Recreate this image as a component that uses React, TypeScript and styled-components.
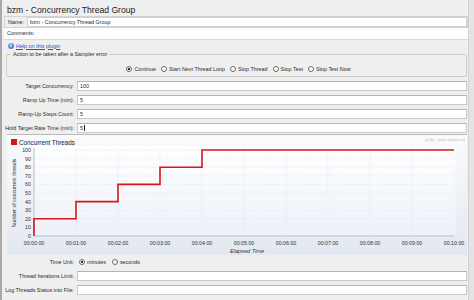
import styled, { createGlobalStyle } from 'styled-components'

const GlobalStyle = createGlobalStyle`
  * { box-sizing: border-box; }
  body {
    margin: 0;
    background: #e9e9e9;
    font-family: 'Liberation Sans', Arial, sans-serif;
    color: #2b2b2b;
  }
`

const minutes = [0, 1, 2, 3, 4, 5, 6, 7, 8, 9, 10]
const levels = [0, 10, 20, 30, 40, 50, 60, 70, 80, 90, 100]
const steps = [20, 40, 60, 80, 100]

// plot area in svg coords
const X0 = 27
const X1 = 447
const YTOP = 15
const YBOT = 101
const px = (m: number) => X0 + ((X1 - X0) * m) / 10
const py = (v: number) => YBOT - ((YBOT - YTOP) * v) / 100

function stepPath() {
  let d = `M${px(0)} ${py(0)} L${px(0)} ${py(20)}`
  steps.forEach((v, i) => {
    const next = steps[i + 1]
    const end = next === undefined ? 10 : i + 1
    d += ` L${px(end)} ${py(v)}`
    if (next !== undefined) d += ` L${px(end)} ${py(next)}`
  })
  return d
}

const pad = (n: number) => `00:${String(n).padStart(2, '0')}:00`

function Chart() {
  return (
    <ChartPanel>
      <svg width='460' height='121' viewBox='0 0 460 121'>
        <defs>
          <linearGradient id='plotBg' x1='0' y1='0' x2='0' y2='1'>
            <stop offset='0' stopColor='#ffffff' />
            <stop offset='1' stopColor='#edf1f8' />
          </linearGradient>
        </defs>
        <rect x={X0} y={YTOP - 4} width={X1 - X0 + 2} height={YBOT - YTOP + 4} fill='url(#plotBg)' />
        <rect x='4' y='4' width='6' height='6' fill='#d8141c' />
        <text x='12' y='10' fontSize='6.3' fill='#222'>Concurrent Threads</text>
        <text x='418' y='6' fontSize='3.4' fill='#b9bec7'>jp@gc - jmeter-plugins.org</text>
        {levels.map(v => (
          <g key={v}>
            <line x1={X0} x2={X1} y1={py(v)} y2={py(v)} stroke='#dfe4ec' strokeWidth='0.6' strokeDasharray='1.5 1' />
            <text x={X0 - 3} y={py(v) + 2} fontSize='5.3' fill='#333' textAnchor='end'>{v}</text>
          </g>
        ))}
        {minutes.map(m => (
          <g key={m}>
            <line x1={px(m)} x2={px(m)} y1={YTOP - 2} y2={YBOT} stroke='#dfe4ec' strokeWidth='0.6' strokeDasharray='1.5 1' />
            <text x={px(m)} y={110} fontSize='5.3' fill='#333' textAnchor='middle'>{pad(m)}</text>
          </g>
        ))}
        <line x1={X0} x2={X0} y1={YTOP - 2} y2={YBOT} stroke='#9aa3b0' strokeWidth='0.6' />
        <line x1={X0} x2={X1} y1={YBOT} y2={YBOT} stroke='#9aa3b0' strokeWidth='0.6' />
        <text x='240' y='118' fontSize='5.6' fontStyle='italic' fill='#333' textAnchor='middle'>Elapsed Time</text>
        <text
          x='0'
          y='0'
          fontSize='5.2'
          fill='#333'
          textAnchor='middle'
          transform='translate(9 58) rotate(-90)'
        >
          Number of concurrent threads
        </text>
        <path d={stepPath()} fill='none' stroke='#d8141c' strokeWidth='1.6' />
      </svg>
    </ChartPanel>
  )
}

function Radio({ label, checked }: { label: string; checked?: boolean }) {
  return (
    <RadioItem>
      <RadioDot $checked={checked} />
      {label}
    </RadioItem>
  )
}

export default function App() {
  return (
    <>
      <GlobalStyle />
      <Page>
        <Main>
          <Title>bzm - Concurrency Thread Group</Title>
          <NameRow>
            <span>Name:</span>
            <Input>bzm - Concurrency Thread Group</Input>
          </NameRow>
          <CommentsRow>Comments:</CommentsRow>
          <Help>
            <InfoIcon>i</InfoIcon>
            <a>Help on this plugin</a>
          </Help>
          <Fieldset>
            <Legend>Action to be taken after a Sampler error</Legend>
            <Radios>
              <Radio label='Continue' checked />
              <Radio label='Start Next Thread Loop' />
              <Radio label='Stop Thread' />
              <Radio label='Stop Test' />
              <Radio label='Stop Test Now' />
            </Radios>
          </Fieldset>
          <Form $top={4}>
            <Label>Target Concurrency:</Label>
            <Input>100</Input>
            <Label>Ramp Up Time (min):</Label>
            <Input>5</Input>
            <Label>Ramp-Up Steps Count:</Label>
            <Input>5</Input>
            <Label>Hold Target Rate Time (min):</Label>
            <Input>5<Caret /></Input>
          </Form>
          <Chart />
          <Form $top={2}>
            <Label>Time Unit:</Label>
            <UnitRadios>
              <Radio label='minutes' checked />
              <Radio label='seconds' />
            </UnitRadios>
            <Label>Thread Iterations Limit:</Label>
            <Input />
            <Label>Log Threads Status into File:</Label>
            <Input />
          </Form>
        </Main>
        <ScrollEdge />
      </Page>
    </>
  )
}

const Page = styled.div`
  width: 474px;
  height: 300px;
  overflow: hidden;
  display: flex;
  border-left: 2px solid #a9a9a9;
  background: #efefef;
`

const Main = styled.div`
  flex: 1;
  padding: 0 0 0 2px;
  display: flex;
  flex-direction: column;
`

const ScrollEdge = styled.div`
  width: 6px;
  background: #e4e4e4;
  border-left: 1px solid #d2d2d2;
`

const Title = styled.div`
  font-size: 8.6px;
  line-height: 10px;
  padding: 5px 0 1px 3px;
  color: #222;
`

const Input = styled.div`
  flex: 1;
  height: 10px;
  background: #fff;
  border: 1px solid #c9c9c9;
  border-top-color: #b4b4b4;
  font-size: 5.4px;
  line-height: 8px;
  padding-left: 2px;
  display: flex;
  align-items: center;
`

const NameRow = styled.div`
  display: flex;
  align-items: center;
  gap: 3px;
  height: 12px;
  padding: 0 0 0 3px;
  border: 1px solid #d3d3d3;
  font-size: 5.4px;

  ${Input} {
    height: 10px;
    border: 1px solid #d0d0d0;
  }
`

const CommentsRow = styled.div`
  height: 12px;
  background: #fdfdfd;
  border-bottom: 1px solid #dadada;
  font-size: 5.4px;
  line-height: 11px;
  padding-left: 3px;
`

const Help = styled.div`
  display: flex;
  align-items: center;
  gap: 2px;
  height: 11px;
  padding-left: 4px;
  font-size: 5.4px;

  a {
    color: #2b4fc9;
    text-decoration: underline;
  }
`

const InfoIcon = styled.span`
  width: 6px;
  height: 6px;
  border-radius: 50%;
  background: radial-gradient(circle at 35% 35%, #8fb6ee, #2f66c4);
  color: #fff;
  font-size: 4.5px;
  font-weight: 700;
  display: flex;
  align-items: center;
  justify-content: center;
`

const Fieldset = styled.div`
  position: relative;
  margin: 3px 1px 0 2px;
  height: 23px;
  border: 1px solid #cccccc;
  border-radius: 2px;
  display: flex;
  align-items: center;
  justify-content: center;
  padding-top: 6px;
`

const Legend = styled.span`
  position: absolute;
  top: -4px;
  left: 4px;
  padding: 0 2px;
  background: #efefef;
  font-size: 5.4px;
  line-height: 7px;
`

const Radios = styled.div`
  display: flex;
  gap: 5px;
  padding-left: 4px;
`

const RadioItem = styled.span`
  display: flex;
  align-items: center;
  gap: 2px;
  font-size: 5.4px;
`

const RadioDot = styled.span<{ $checked?: boolean }>`
  width: 6px;
  height: 6px;
  border-radius: 50%;
  border: 0.6px solid #6d6d6d;
  background: ${p => (p.$checked ? 'radial-gradient(circle, #333 0 1.3px, #fff 1.6px)' : '#fff')};
`

const Form = styled.div<{ $top?: number }>`
  display: grid;
  grid-template-columns: 70px 1fr;
  column-gap: 3px;
  row-gap: 4px;
  align-items: center;
  margin-top: ${p => p.$top ?? 5}px;
  padding-right: 1px;
`

const Label = styled.span`
  font-size: 5.4px;
  text-align: right;
  white-space: nowrap;
`

const Caret = styled.span`
  width: 0.6px;
  height: 6px;
  background: #222;
  margin-left: 0.5px;
`

const UnitRadios = styled.div`
  display: flex;
  gap: 6px;
  height: 10px;
  align-items: center;
  padding-left: 2px;
`

const ChartPanel = styled.div`
  margin: 1px 1px 0 3px;
  height: 121px;
  border-top: 1px solid #b9b9b9;
  background: linear-gradient(#fafbfd, #e3e8f0);

  svg {
    display: block;
    font-family: 'Liberation Sans', Arial, sans-serif;
  }
`
